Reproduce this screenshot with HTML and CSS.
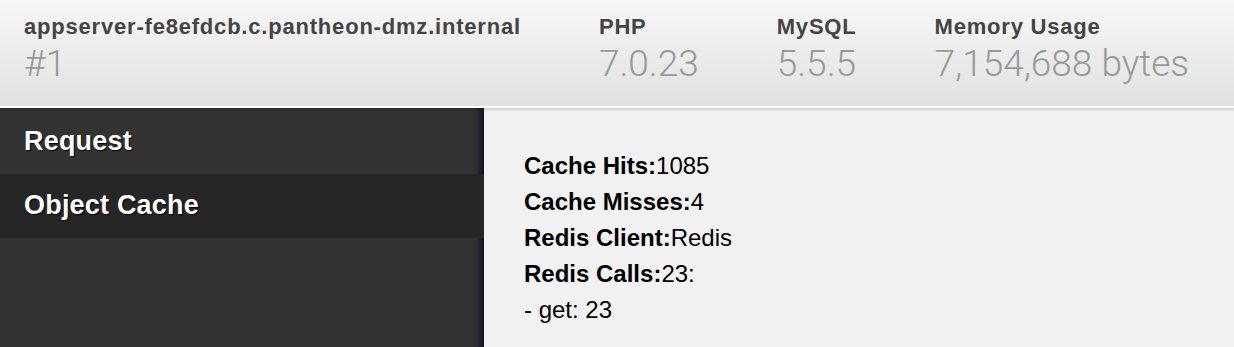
FILE: index.html
```html
<!DOCTYPE html>
<html>
<head>
<meta charset="utf-8">
<link rel="stylesheet" href="styles.css">
</head>
<body>
<header class="topbar">
  <div class="stat">
    <div class="stat-label">appserver-fe8efdcb.c.pantheon-dmz.internal</div>
    <div class="stat-value">#1</div>
  </div>
  <div class="stat">
    <div class="stat-label">PHP</div>
    <div class="stat-value">7.0.23</div>
  </div>
  <div class="stat">
    <div class="stat-label">MySQL</div>
    <div class="stat-value">5.5.5</div>
  </div>
  <div class="stat">
    <div class="stat-label">Memory Usage</div>
    <div class="stat-value">7,154,688 bytes</div>
  </div>
</header>
<div class="main">
  <nav class="sidebar">
    <a class="nav-item">Request</a>
    <a class="nav-item active">Object Cache</a>
  </nav>
  <section class="panel">
    <p class="row"><strong>Cache Hits:</strong>1085</p>
    <p class="row"><strong>Cache Misses:</strong>4</p>
    <p class="row"><strong>Redis Client:</strong>Redis</p>
    <p class="row"><strong>Redis Calls:</strong>23:</p>
    <p class="row">- get: 23</p>
  </section>
</div>
</body>
</html>
```

FILE: styles.css
```css
html, body {
  margin: 0;
  padding: 0;
  height: 100%;
}
body {
  font-family: "Liberation Sans", Arial, sans-serif;
  background: #f1f1f1;
  overflow: hidden;
}
.topbar {
  box-sizing: border-box;
  height: 108px;
  padding: 14px 24px 0;
  display: flex;
  gap: 78px;
  background: linear-gradient(#f7f7f7, #e1e1e1);
  border-bottom: 2px solid #ffffff;
  box-shadow: 0 2px 2px rgba(0, 0, 0, 0.15);
  position: relative;
  z-index: 1;
}
.stat-label {
  font-size: 22px;
  line-height: 26px;
  font-weight: bold;
  color: #444444;
  letter-spacing: 0.8px;
}
.stat-value {
  margin-top: 4px;
  font-family: Roboto, "Liberation Sans", sans-serif;
  font-weight: 300;
  font-size: 37px;
  line-height: 40px;
  color: #999999;
}
.main {
  display: flex;
  height: calc(100% - 108px);
}
.sidebar {
  width: 484px;
  flex: none;
  background: #333333;
  padding-top: 2px;
  box-shadow: inset -9px 0 6px -5px rgba(10, 10, 35, 0.85);
}
.nav-item {
  display: block;
  height: 64px;
  line-height: 62px;
  padding-left: 24px;
  font-size: 27px;
  font-weight: bold;
  color: #ffffff;
  text-shadow: 1px 1px 1px #000000;
  letter-spacing: 0.2px;
}
.nav-item.active {
  background: #262626;
}
.panel {
  padding: 40px 40px 0;
  font-size: 24px;
  line-height: 36px;
  color: #000000;
}
.row {
  margin: 0;
}
```
